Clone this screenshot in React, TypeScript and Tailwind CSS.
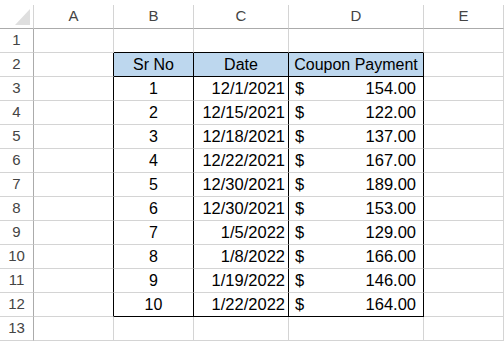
import React from "react";

const cols = ["A", "B", "C", "D", "E"];

const data = [
  ["1", "12/1/2021", "154.00"],
  ["2", "12/15/2021", "122.00"],
  ["3", "12/18/2021", "137.00"],
  ["4", "12/22/2021", "167.00"],
  ["5", "12/30/2021", "189.00"],
  ["6", "12/30/2021", "153.00"],
  ["7", "1/5/2022", "129.00"],
  ["8", "1/8/2022", "166.00"],
  ["9", "1/19/2022", "146.00"],
  ["10", "1/22/2022", "164.00"],
];

const grid = "border-b-[#d4d4d4]";

export default function App() {
  const rows = Array.from({ length: 13 }, (_, i) => i + 1);

  return (
    <div className="h-[341px] w-[504px] overflow-hidden bg-white font-['Liberation_Sans',Arial,sans-serif] text-[16px] text-black">
      <div className="grid grid-cols-[34px_80px_80px_95px_135px_80px]">
        {/* spacer above column letters */}
        <div className="col-span-6 h-[5px]" />

        {/* column header row */}
        <div className="relative h-6 border-b border-r border-b-[#ababab] border-r-[#d4d4d4]">
          <svg className="absolute left-0 top-0" width="33" height="23" viewBox="0 0 33 23">
            <polygon points="15,20 30,20 30,4" fill="#dfdfdf" />
          </svg>
        </div>
        {cols.map((c) => (
          <div
            key={c}
            className="flex h-6 items-center justify-center border-b border-r border-b-[#ababab] border-r-[#d4d4d4] text-[15px] text-[#444]"
          >
            {c}
          </div>
        ))}

        {rows.map((r) => {
          const inTable = r >= 2 && r <= 12;
          const isHead = r === 2;
          const item = r >= 3 && r <= 12 ? data[r - 3] : null;
          const tBottom =
            r === 1 || r === 2 || r === 12 ? "border-b-black" : grid;
          const tRight = inTable ? "border-r-black" : "border-r-[#d4d4d4]";
          const fill = isHead ? "bg-[#bdd7ee]" : "";

          return (
            <React.Fragment key={r}>
              <div className="flex h-6 items-center justify-center border-b border-r border-b-[#d4d4d4] border-r-[#ababab] text-[15px] text-[#444]">
                {r}
              </div>
              <div
                className={`h-6 border-b border-r ${grid} ${
                  inTable ? "border-r-black" : "border-r-[#d4d4d4]"
                }`}
              />
              <div
                className={`flex h-6 items-center justify-center border-b border-r ${tBottom} ${tRight} ${fill}`}
              >
                {isHead ? "Sr No" : item?.[0]}
              </div>
              <div
                className={`flex h-6 items-center border-b border-r ${tBottom} ${tRight} ${fill} ${
                  isHead ? "justify-center" : "justify-end pr-[3px] text-[16.5px]"
                }`}
              >
                {isHead ? "Date" : item?.[1]}
              </div>
              <div
                className={`flex h-6 items-center border-b border-r ${tBottom} ${tRight} ${fill} ${
                  isHead ? "justify-center" : "justify-between pl-[6px] pr-[7px] text-[16.5px]"
                }`}
              >
                {isHead ? (
                  "Coupon Payment"
                ) : item ? (
                  <>
                    <span>$</span>
                    <span>{item[2]}</span>
                  </>
                ) : null}
              </div>
              <div className={`h-6 border-b border-r ${grid} border-r-[#d4d4d4]`} />
            </React.Fragment>
          );
        })}
      </div>
    </div>
  );
}
